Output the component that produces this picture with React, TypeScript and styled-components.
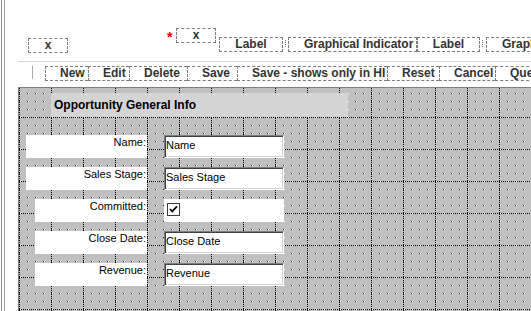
import React from 'react';
import styled, { createGlobalStyle } from 'styled-components';

const Global = createGlobalStyle`
  html, body { margin: 0; padding: 0; background: #fff; }
  body { font-family: "Liberation Sans", Arial, sans-serif; }
`;

const Page = styled.div`
  width: 531px;
  height: 311px;
  overflow: hidden;
  display: flex;
  background: #fff;
`;

const Frame = styled.div`
  flex: none;
  box-sizing: border-box;
  width: 4px;
  margin-left: 1px;
  border-left: 1px solid #8c8c8c;
  border-right: 1px solid #9c9c9c;
`;

const Main = styled.div`
  flex: 1;
  min-width: 0;
  display: flex;
  flex-direction: column;
`;

const TopRow = styled.div`
  height: 61px;
  flex: none;
  display: flex;
  align-items: flex-start;
`;

const Dashed = styled.div<{ $w: number; $top?: number; $left?: number; $pad?: number }>`
  box-sizing: border-box;
  flex: none;
  height: 15px;
  width: ${p => p.$w}px;
  margin-top: ${p => p.$top ?? 0}px;
  margin-left: ${p => p.$left ?? 0}px;
  padding-left: ${p => p.$pad ?? 0}px;
  border: 1px dashed #7d7d7d;
  font: bold 12px/13px "Liberation Sans", Arial, sans-serif;
  color: #333;
  text-align: ${p => (p.$pad ? 'left' : 'center')};
  white-space: nowrap;
  overflow: hidden;
`;

const Asterisk = styled.span`
  flex: none;
  width: 6px;
  margin: 32px 0 0 99px;
  font: bold 14px/10px "Liberation Sans", Arial, sans-serif;
  color: #e00000;
`;

const DotSep = styled.div<{ $left: number }>`
  flex: none;
  width: 0;
  height: 7px;
  margin: 40px 0 0 ${p => p.$left}px;
  border-left: 1px dotted #777;
`;

const Divider = styled.div`
  flex: none;
  height: 1px;
  margin-left: 13px;
  background: #d4d4d4;
`;

const Toolbar = styled.div`
  flex: none;
  height: 25px;
  box-sizing: border-box;
  padding-top: 4px;
  display: flex;
  align-items: flex-start;
`;

const ToolSep = styled.div`
  flex: none;
  width: 1px;
  height: 13px;
  margin: 0 12px 0 27px;
  background: #a8a8a8;
`;

const ToolButton = styled.div<{ $w: number; $last?: boolean }>`
  box-sizing: border-box;
  flex: none;
  width: ${p => p.$w}px;
  height: 15px;
  padding-left: 14px;
  border: 1px dashed #7d7d7d;
  border-right: ${p => (p.$last ? '1px dashed #7d7d7d' : 'none')};
  font: bold 12px/13px "Liberation Sans", Arial, sans-serif;
  color: #333;
  white-space: nowrap;
  overflow: hidden;
`;

const Canvas = styled.div`
  flex: 1;
  margin-left: 13px;
  border-top: 1px solid #808080;
  border-left: 1px solid #808080;
  background-color: #c0c0c0;
  background-image:
    conic-gradient(at 1px 1px, transparent 75%, #000 0),
    conic-gradient(at 1px 1px, transparent 75%, #000 0),
    conic-gradient(at 1px 1px, transparent 75%, #222 0),
    conic-gradient(at 1px 1px, transparent 75%, #fff 0);
  background-size: 32px 2px, 2px 32px, 8px 8px, 8px 8px;
  background-position: 0 0, 0 29px, 0 29px, 1px 29px;
  display: flex;
  flex-direction: column;
  align-items: flex-start;
`;

const SectionHeader = styled.div`
  box-sizing: border-box;
  width: 297px;
  height: 24px;
  margin: 5px 0 0 32px;
  padding-left: 3px;
  background: #d4d4d4;
  font: bold 12px/24px "Liberation Sans", Arial, sans-serif;
  color: #000;
  white-space: nowrap;
`;

const Form = styled.div`
  margin-top: 18px;
  display: grid;
  grid-template-columns: 128px 120px;
  grid-auto-rows: 23px;
  column-gap: 17px;
  row-gap: 9px;
`;

const FieldLabel = styled.div<{ $w: number }>`
  justify-self: end;
  box-sizing: border-box;
  width: ${p => p.$w}px;
  padding: 1px 1px 0 0;
  background: #fff;
  text-align: right;
  font: 11px/13px "Liberation Sans", Arial, sans-serif;
  color: #000;
  white-space: nowrap;
`;

const TextInput = styled.div`
  box-sizing: border-box;
  background: #fff;
  border: 1px solid;
  border-color: #808080 #fff #fff #808080;
  box-shadow: inset 1px 1px 0 #404040, inset -1px -1px 0 #d4d4d4;
  padding: 1px 0 0 1px;
  font: 11px/16px "Liberation Sans", Arial, sans-serif;
  color: #000;
  white-space: nowrap;
  overflow: hidden;
`;

const CheckCell = styled.div`
  background: #fff;
  padding: 4px 0 0 3px;
  line-height: 0;
`;

const Check = () => (
  <svg width="13" height="13" viewBox="0 0 13 13">
    <rect x="0.5" y="0.5" width="12" height="12" fill="#fff" stroke="#3a3a3a" />
    <path d="M3 6 L5.2 8.4 L10 3.4" fill="none" stroke="#000" strokeWidth="1.7" />
  </svg>
);

const tools: [string, number][] = [
  ['New', 43],
  ['Edit', 41],
  ['Delete', 58],
  ['Save', 50],
  ['Save - shows only in HI', 150],
  ['Reset', 52],
  ['Cancel', 56],
  ['Query', 60],
];

export default function App() {
  return (
    <>
      <Global />
      <Page>
        <Frame />
        <Main>
          <TopRow>
            <Dashed $w={40} $top={38} $left={23}>x</Dashed>
            <Asterisk>*</Asterisk>
            <Dashed $w={40} $top={28} $left={3}>x</Dashed>
            <Dashed $w={64} $top={37} $left={3}>Label</Dashed>
            <DotSep $left={2} />
            <Dashed $w={129} $top={37} $left={2} $pad={15}>Graphical Indicator</Dashed>
            <Dashed $w={63} $top={37}>Label</Dashed>
            <DotSep $left={2} />
            <Dashed $w={90} $top={37} $left={3} $pad={15}>Graphical Indicator</Dashed>
          </TopRow>
          <Divider />
          <Toolbar>
            <ToolSep />
            {tools.map(([t, w], i) => (
              <ToolButton key={t} $w={w} $last={i === tools.length - 1}>{t}</ToolButton>
            ))}
          </Toolbar>
          <Canvas>
            <SectionHeader>Opportunity General Info</SectionHeader>
            <Form>
              <FieldLabel $w={121}>Name:</FieldLabel>
              <TextInput>Name</TextInput>
              <FieldLabel $w={121}>Sales Stage:</FieldLabel>
              <TextInput>Sales Stage</TextInput>
              <FieldLabel $w={112}>Committed:</FieldLabel>
              <CheckCell><Check /></CheckCell>
              <FieldLabel $w={112}>Close Date:</FieldLabel>
              <TextInput>Close Date</TextInput>
              <FieldLabel $w={112}>Revenue:</FieldLabel>
              <TextInput>Revenue</TextInput>
            </Form>
          </Canvas>
        </Main>
      </Page>
    </>
  );
}
